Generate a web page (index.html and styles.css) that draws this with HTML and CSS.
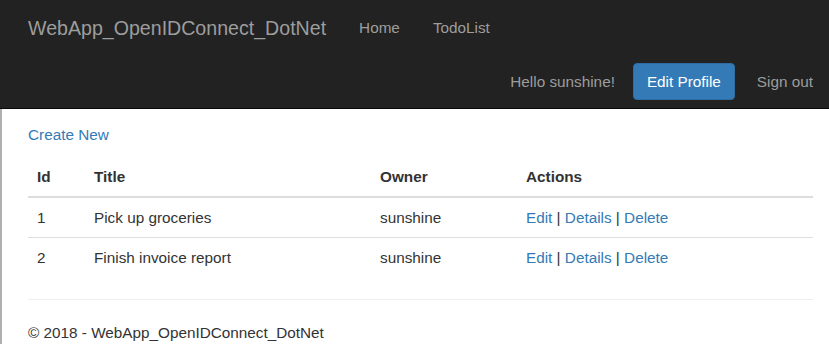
FILE: index.html
```html
<!DOCTYPE html>
<html lang="en">
<head>
<meta charset="utf-8">
<title>Index - WebApp_OpenIDConnect_DotNet</title>
<link rel="stylesheet" href="styles.css">
</head>
<body>
<header class="navbar">
  <div class="nav-top">
    <a class="brand" href="#">WebApp_OpenIDConnect_DotNet</a>
    <a class="nav-link" href="#">Home</a>
    <a class="nav-link" href="#">TodoList</a>
  </div>
  <div class="nav-user">
    <span class="hello">Hello sunshine!</span>
    <a class="btn-primary" href="#">Edit Profile</a>
    <a class="signout" href="#">Sign out</a>
  </div>
</header>
<main class="page">
  <p class="create"><a href="#">Create New</a></p>
  <table class="table">
    <thead>
      <tr>
        <th class="col-id">Id</th>
        <th class="col-title">Title</th>
        <th class="col-owner">Owner</th>
        <th class="col-actions">Actions</th>
      </tr>
    </thead>
    <tbody>
      <tr>
        <td>1</td>
        <td>Pick up groceries</td>
        <td>sunshine</td>
        <td><a href="#">Edit</a> | <a href="#">Details</a> | <a href="#">Delete</a></td>
      </tr>
      <tr>
        <td>2</td>
        <td>Finish invoice report</td>
        <td>sunshine</td>
        <td><a href="#">Edit</a> | <a href="#">Details</a> | <a href="#">Delete</a></td>
      </tr>
    </tbody>
  </table>
  <hr class="rule">
  <footer class="footer">
    <p>&copy; 2018 - WebApp_OpenIDConnect_DotNet</p>
  </footer>
</main>
</body>
</html>
```

FILE: styles.css
```css
* { box-sizing: border-box; }
html, body { margin: 0; padding: 0; }
body {
  font-family: "Liberation Sans", Arial, sans-serif;
  font-size: 15.3px;
  line-height: 22px;
  color: #333;
  background: #fff;
  width: 829px;
  height: 358px;
  overflow: hidden;
}
a { color: #337ab7; text-decoration: none; }

.navbar {
  background: #222;
  border-bottom: 1px solid #080808;
  height: 109px;
}
.nav-top {
  display: flex;
  align-items: center;
  height: 55px;
  padding-left: 11.5px;
}
.brand {
  color: #9d9d9d;
  font-size: 19.6px;
  line-height: 22px;
  padding: 16.5px;
}
.nav-link {
  color: #9d9d9d;
  padding: 16.5px;
  line-height: 22px;
}
.nav-user {
  display: flex;
  align-items: center;
  justify-content: flex-end;
  height: 53px;
  padding-right: 16px;
}
.hello {
  color: #9d9d9d;
  margin-right: 18px;
}
.btn-primary {
  display: inline-block;
  background: #337ab7;
  border: 1px solid #2e6da4;
  color: #fff;
  border-radius: 4px;
  padding: 7px 13px;
  line-height: 22px;
  height: 37px;
  margin-right: 22px;
}
.signout { color: #9d9d9d; }

.page {
  border-left: 2px solid #b0b0b0;
  padding: 15px 16px 0 26px;
}
.create { margin: 0 0 11px; }

.table {
  width: 100%;
  border-collapse: collapse;
  border-spacing: 0;
  margin-bottom: 22px;
}
.table th, .table td {
  text-align: left;
  padding: 8.5px 8.8px 8.5px 9px;
  line-height: 22px;
  vertical-align: top;
}
.table th {
  font-weight: bold;
  border-bottom: 2px solid #ddd;
}
.table tbody td { border-top: 1px solid #ddd; }
.col-id { width: 57px; }
.col-title { width: 286px; }
.col-owner { width: 146px; }

.rule {
  border: 0;
  border-top: 1px solid #eee;
  margin: 0 0 22px;
}
.footer p { margin: 0; }
```
